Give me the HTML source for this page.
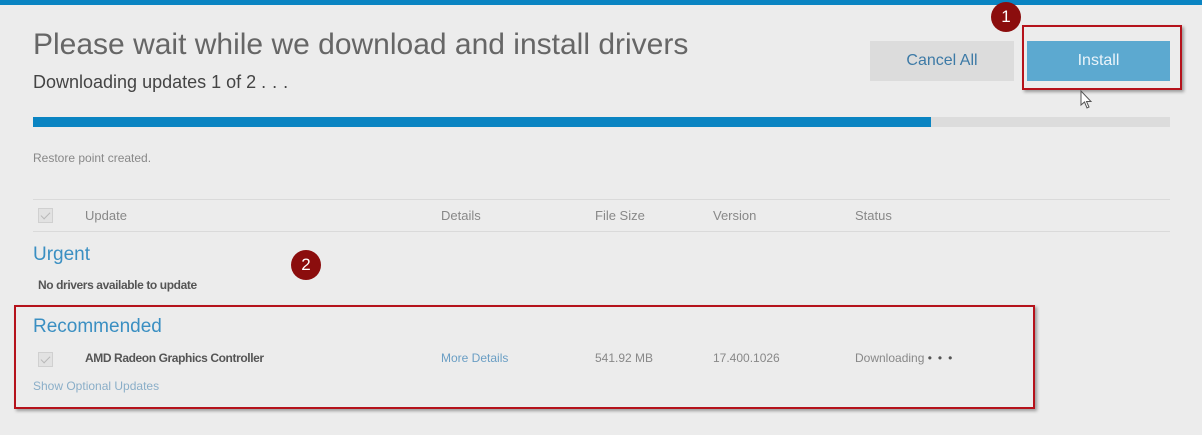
<!DOCTYPE html>
<html><head><style>
*{margin:0;padding:0;box-sizing:border-box}
body{width:1202px;height:435px;background:#ececec;font-family:"Liberation Sans",sans-serif;position:relative;overflow:hidden;color:#555}
.a{position:absolute;white-space:nowrap}
.cb{position:absolute;width:15px;height:15px;border:1px solid #d0d0d0;background:#e2e2e2}
.cb:after{content:"";position:absolute;left:4px;top:1px;width:4px;height:8px;border:solid #b8b8b8;border-width:0 1px 1px 0;transform:rotate(45deg)}
.red{position:absolute;border:2px solid #b5121b;box-shadow:2px 2px 3px rgba(0,0,0,.35)}
.num{position:absolute;width:30px;height:30px;border-radius:50%;background:#8b0d0d;color:#fff;font-size:17px;text-align:center;line-height:30px}
.h{font-size:13px;color:#888}
.s{font-size:12px;color:#888}
</style></head><body>
<div class="a" style="left:0;top:0;width:1202px;height:5px;background:#0a84c2"></div>
<div class="a" style="left:33px;top:28px;font-size:30px;color:#666">Please wait while we download and install drivers</div>
<div class="a" style="left:33px;top:72px;font-size:18px;color:#444">Downloading updates 1 of 2 <span style="letter-spacing:6px">...</span></div>
<div class="a" style="left:870px;top:41px;width:144px;height:40px;background:#dcdcdc;color:#3d7aa6;font-size:16px;text-align:center;line-height:40px">Cancel All</div>
<div class="a" style="left:1027px;top:41px;width:143px;height:40px;background:#5ca9d0;color:#eaf4fa;font-size:16px;text-align:center;line-height:40px">Install</div>
<div class="red" style="left:1022px;top:25px;width:160px;height:65px"></div>
<div class="num" style="left:991px;top:2px">1</div>
<svg class="a" style="left:1080px;top:90px" width="14" height="20"><path d="M1 1 L1 15 L4.5 12 L7 18 L9 17 L6.5 11.5 L11 11.5 Z" fill="#fff" stroke="#555" stroke-width="1"/></svg>
<div class="a" style="left:33px;top:117px;width:1137px;height:10px;background:#dcdcdc"></div>
<div class="a" style="left:33px;top:117px;width:898px;height:10px;background:#0a84c2"></div>
<div class="a s" style="left:33px;top:151px">Restore point created.</div>
<div class="a" style="left:33px;top:199px;width:1137px;height:1px;background:#dadada"></div>
<div class="a" style="left:33px;top:231px;width:1137px;height:1px;background:#dadada"></div>
<div class="cb" style="left:38px;top:208px"></div>
<div class="a h" style="left:85px;top:208px">Update</div>
<div class="a h" style="left:441px;top:208px">Details</div>
<div class="a h" style="left:595px;top:208px">File Size</div>
<div class="a h" style="left:713px;top:208px">Version</div>
<div class="a h" style="left:855px;top:208px">Status</div>
<div class="a" style="left:33px;top:244px;font-size:19px;color:#3a8fc2">Urgent</div>
<div class="num" style="left:291px;top:250px">2</div>
<div class="a" style="left:38px;top:278px;font-size:12px;color:#555;font-weight:bold;letter-spacing:-.4px">No drivers available to update</div>
<div class="red" style="left:14px;top:305px;width:1021px;height:104px"></div>
<div class="a" style="left:33px;top:316px;font-size:19px;color:#3a8fc2">Recommended</div>
<div class="cb" style="left:38px;top:352px"></div>
<div class="a" style="left:85px;top:351px;font-size:12px;color:#555;font-weight:bold;letter-spacing:-.4px">AMD Radeon Graphics Controller</div>
<div class="a s" style="left:441px;top:351px;color:#6a9ec4">More Details</div>
<div class="a s" style="left:595px;top:351px">541.92 MB</div>
<div class="a s" style="left:713px;top:351px">17.400.1026</div>
<div class="a s" style="left:855px;top:351px">Downloading <span style="color:#555;letter-spacing:6px">•••</span></div>
<div class="a s" style="left:33px;top:379px;color:#8aaec8">Show Optional Updates</div>
</body></html>
